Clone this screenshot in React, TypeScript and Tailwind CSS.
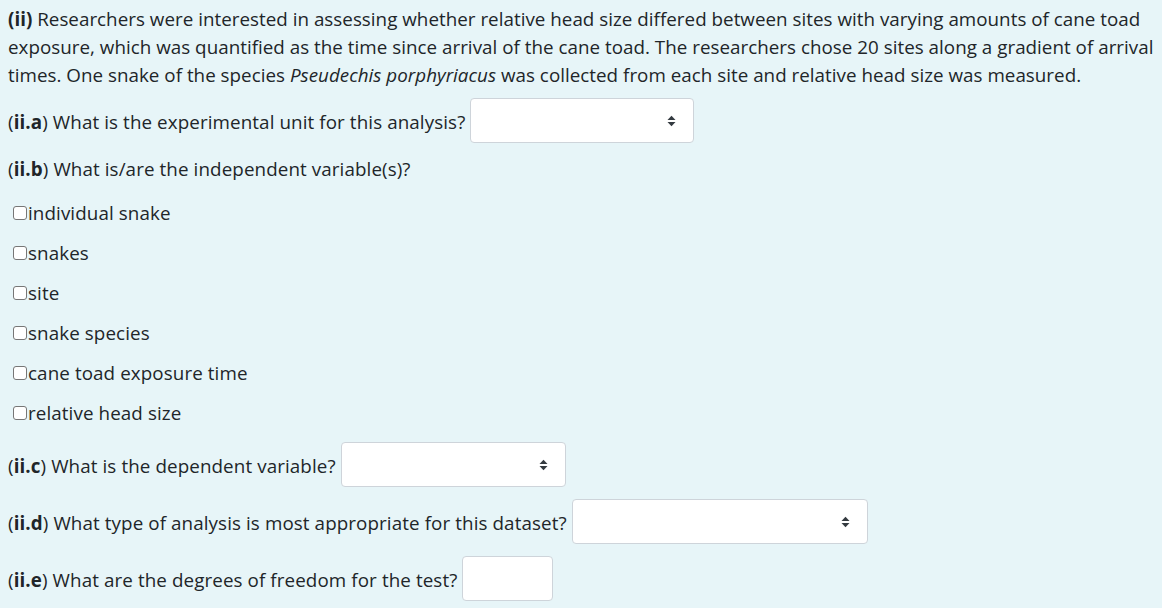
function Arrows() {
  return (
    <svg width="9" height="12" viewBox="0 0 9 12" className="shrink-0">
      <path d="M0.5 5 L4.5 0.8 L8.5 5 Z" fill="#343a40" />
      <path d="M0.5 7 L4.5 11.2 L8.5 7 Z" fill="#343a40" />
    </svg>
  );
}

function Select({ w }: { w: string }) {
  return (
    <div className={`${w} ml-[5px] h-[45px] bg-white border border-[#ced4da] rounded-[4px] flex items-center justify-end pr-[17px] shrink-0`}>
      <Arrows />
    </div>
  );
}

function Check({ label }: { label: string }) {
  return (
    <div className="flex items-center h-[28px]">
      <span className="ml-[5px] mr-[1px] w-[14px] h-[14px] border border-[#767676] rounded-[3px] bg-white shrink-0" />
      <span className="tracking-[0.1px]">{label}</span>
    </div>
  );
}

function Q({ id, text }: { id: string; text: string }) {
  return (
    <span className="pt-[2px] tracking-[0.1px]">
      (<b className="font-bold">{id}</b>) {text}
    </span>
  );
}

export default function App() {
  return (
    <div
      className="bg-[#e7f5f8] h-[608px] overflow-hidden pl-[8px] pt-[5px] text-[#212529] text-[18.8px] leading-[28px] whitespace-nowrap"
      style={{ fontFamily: "'Open Sans', 'Noto Sans', sans-serif" }}
    >
      <p className="tracking-[0.025px]">
        <b className="font-bold">(ii)</b> Researchers were interested in assessing whether relative head size differed between sites with varying amounts of cane toad
        <br />
        exposure, which was quantified as the time since arrival of the cane toad. The researchers chose 20 sites along a gradient of arrival
        <br />
        times. One snake of the species <i>Pseudechis porphyriacus</i> was collected from each site and relative head size was measured.
      </p>

      <div className="flex items-center mt-[9px]">
        <Q id="ii.a" text="What is the experimental unit for this analysis?" />
        <Select w="w-[224px]" />
      </div>

      <div className="mt-[12px] h-[28px]">
        <Q id="ii.b" text="What is/are the independent variable(s)?" />
      </div>

      <div className="pt-[16px] flex flex-col gap-[12px]">
        <Check label="individual snake" />
        <Check label="snakes" />
        <Check label="site" />
        <Check label="snake species" />
        <Check label="cane toad exposure time" />
        <Check label="relative head size" />
      </div>

      <div className="flex items-center mt-[15px]">
        <Q id="ii.c" text="What is the dependent variable?" />
        <Select w="w-[225px]" />
      </div>

      <div className="flex items-center mt-[12px]">
        <Q id="ii.d" text="What type of analysis is most appropriate for this dataset?" />
        <Select w="w-[296px]" />
      </div>

      <div className="flex items-center mt-[12px]">
        <Q id="ii.e" text="What are the degrees of freedom for the test?" />
        <div className="ml-[5px] w-[91px] h-[45px] bg-white border border-[#ced4da] rounded-[4px] shrink-0" />
      </div>
    </div>
  );
}
